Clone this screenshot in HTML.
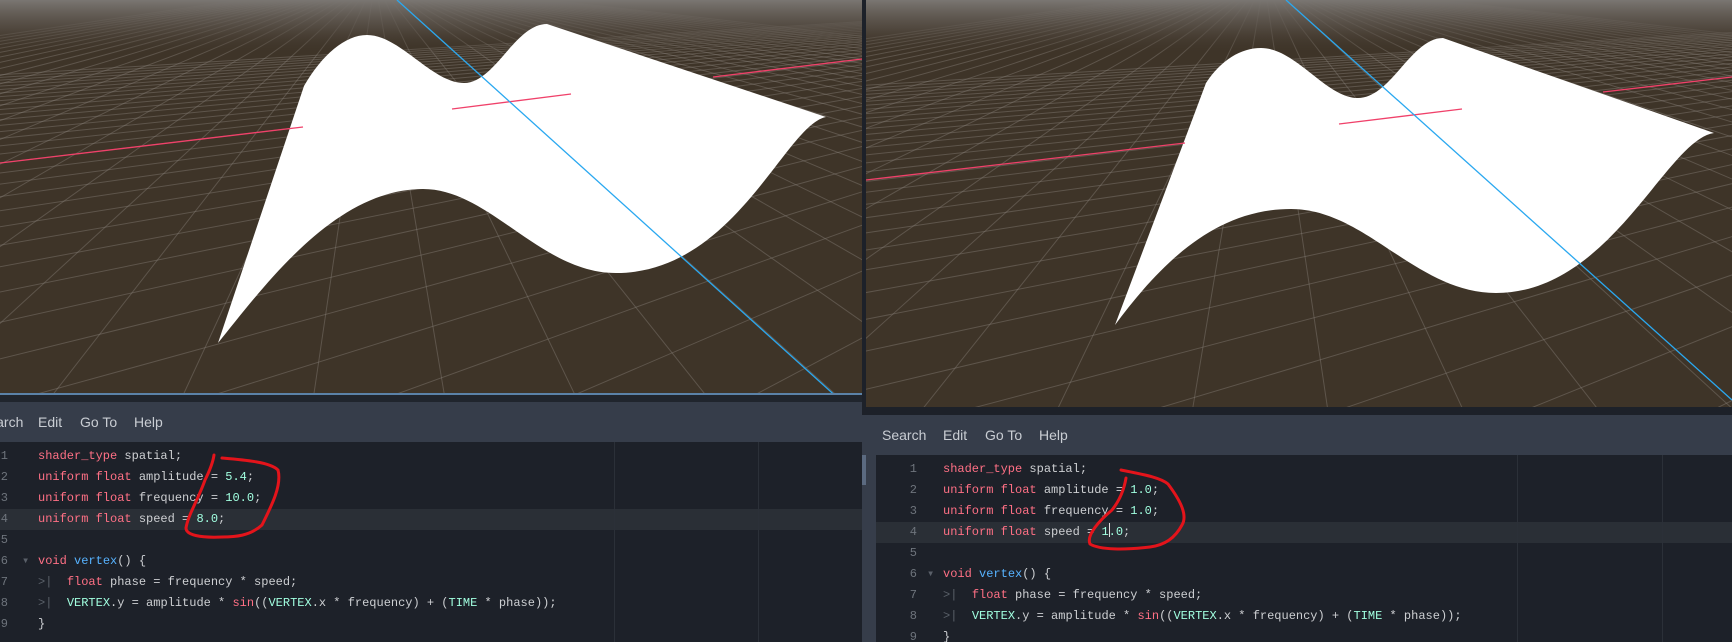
<!DOCTYPE html>
<html><head><meta charset="utf-8"><style>
*{margin:0;padding:0;box-sizing:border-box}
html,body{width:1732px;height:642px;overflow:hidden}
body{background:#1d2129;position:relative;font-family:"Liberation Sans",sans-serif}
.abs{position:absolute}
.menu{position:absolute;background:#363d4a;color:#c9cdd3;font-size:14px}
.menu span{position:absolute;top:0}
.code{position:absolute;background:#1d2129;overflow:hidden;font-family:"Liberation Mono",monospace;font-size:12px;color:#cdcfd2}
.ln{position:absolute;height:21px;line-height:21px;white-space:pre}
.n{color:#6e747c;text-align:right;width:14px}
.k{color:#ff7085}.num{color:#a1ffe0}.f{color:#57b3ff}.c{color:#a1ffe0}.t{color:#5a6069}
.hl{position:absolute;background:#2a2f36;height:21px}
.g{position:absolute;width:1px;background:#2b3038}
</style></head><body>
<svg class="abs" style="left:0;top:0" width="862" height="393" id="v1"></svg>
<div class="abs" style="left:0;top:393px;width:862px;height:2px;background:#5b82a8"></div>
<div class="abs" style="left:0;top:395px;width:862px;height:7px;background:#20252d"></div>
<div class="menu" style="left:0;top:402px;width:862px;height:40px"><span style="left:-21px;top:12px">Search</span><span style="left:38px;top:12px">Edit</span><span style="left:80px;top:12px">Go To</span><span style="left:134px;top:12px">Help</span></div>
<div class="code" style="left:0;top:442px;width:862px;height:200px">
<div class="hl" style="left:0;top:67px;width:862px"></div>
<div class="g" style="left:614px;top:0;height:200px"></div><div class="g" style="left:758px;top:0;height:200px"></div>
<div class="ln n" style="left:-6px;top:4px">1</div><div class="ln" style="left:38px;top:4px"><span class="k">shader_type</span> spatial;</div>
<div class="ln n" style="left:-6px;top:25px">2</div><div class="ln" style="left:38px;top:25px"><span class="k">uniform float</span> amplitude = <span class="num">5.4</span>;</div>
<div class="ln n" style="left:-6px;top:46px">3</div><div class="ln" style="left:38px;top:46px"><span class="k">uniform float</span> frequency = <span class="num">10.0</span>;</div>
<div class="ln n" style="left:-6px;top:67px">4</div><div class="ln" style="left:38px;top:67px"><span class="k">uniform float</span> speed = <span class="num">8.0</span>;</div>
<div class="ln n" style="left:-6px;top:88px">5</div>
<div class="ln n" style="left:-6px;top:109px">6</div><div class="ln t" style="left:22px;top:109px">▾</div><div class="ln" style="left:38px;top:109px"><span class="k">void</span> <span class="f">vertex</span>() {</div>
<div class="ln n" style="left:-6px;top:130px">7</div><div class="ln" style="left:38px;top:130px"><span class="t">&gt;|</span>  <span class="k">float</span> phase = frequency * speed;</div>
<div class="ln n" style="left:-6px;top:151px">8</div><div class="ln" style="left:38px;top:151px"><span class="t">&gt;|</span>  <span class="c">VERTEX</span>.y = amplitude * <span class="k">sin</span>((<span class="c">VERTEX</span>.x * frequency) + (<span class="c">TIME</span> * phase));</div>
<div class="ln n" style="left:-6px;top:172px">9</div><div class="ln" style="left:38px;top:172px">}</div>
</div>
<div class="abs" style="left:862px;top:442px;width:5px;height:200px;background:#2a2f37"></div>
<div class="abs" style="left:862px;top:457px;width:5px;height:28px;background:#5b6a80;border-radius:2px"></div>

<svg class="abs" style="left:866px;top:0" width="866" height="407" id="v2"></svg>
<div class="abs" style="left:866px;top:407px;width:866px;height:8px;background:#1d2129"></div>
<div class="menu" style="left:862px;top:415px;width:870px;height:227px"><span style="left:20px;top:12px">Search</span><span style="left:81px;top:12px">Edit</span><span style="left:123px;top:12px">Go To</span><span style="left:177px;top:12px">Help</span></div>
<div class="abs" style="left:862px;top:455px;width:4px;height:30px;background:#5b6a80"></div>
<div class="code" style="left:876px;top:455px;width:856px;height:187px">
<div class="hl" style="left:0;top:67px;width:856px"></div>
<div class="g" style="left:641px;top:0;height:187px"></div><div class="g" style="left:786px;top:0;height:187px"></div>
<div class="ln n" style="left:27px;top:4px">1</div><div class="ln" style="left:67px;top:4px"><span class="k">shader_type</span> spatial;</div>
<div class="ln n" style="left:27px;top:25px">2</div><div class="ln" style="left:67px;top:25px"><span class="k">uniform float</span> amplitude = <span class="num">1.0</span>;</div>
<div class="ln n" style="left:27px;top:46px">3</div><div class="ln" style="left:67px;top:46px"><span class="k">uniform float</span> frequency = <span class="num">1.0</span>;</div>
<div class="ln n" style="left:27px;top:67px">4</div><div class="ln" style="left:67px;top:67px"><span class="k">uniform float</span> speed = <span class="num">1</span><span style="display:inline-block;width:1px;height:14px;background:#e0e0e0;vertical-align:-2px;margin-right:-1px"></span><span class="num">.0</span>;</div>
<div class="ln n" style="left:27px;top:88px">5</div>
<div class="ln n" style="left:27px;top:109px">6</div><div class="ln t" style="left:51px;top:109px">▾</div><div class="ln" style="left:67px;top:109px"><span class="k">void</span> <span class="f">vertex</span>() {</div>
<div class="ln n" style="left:27px;top:130px">7</div><div class="ln" style="left:67px;top:130px"><span class="t">&gt;|</span>  <span class="k">float</span> phase = frequency * speed;</div>
<div class="ln n" style="left:27px;top:151px">8</div><div class="ln" style="left:67px;top:151px"><span class="t">&gt;|</span>  <span class="c">VERTEX</span>.y = amplitude * <span class="k">sin</span>((<span class="c">VERTEX</span>.x * frequency) + (<span class="c">TIME</span> * phase));</div>
<div class="ln n" style="left:27px;top:172px">9</div><div class="ln" style="left:67px;top:172px">}</div>
</div>
<svg class="abs" style="left:0;top:0" width="1732" height="642">
<path d="M222,458 C245,460 270,462 278,470 C282,485 272,505 262,525 C250,536 235,537 222,537 C200,538 186,535 186,528 C188,515 198,500 205,480 C210,470 213,462 214,455" fill="none" stroke="#e3141b" stroke-width="3" stroke-linecap="round"/>
<path d="M1121,470 C1140,474 1160,477 1168,484 C1180,500 1188,515 1182,525 C1175,538 1165,545 1150,547 C1125,550 1100,550 1090,544 C1086,535 1100,520 1112,510 C1120,500 1124,490 1126,478" fill="none" stroke="#e3141b" stroke-width="3" stroke-linecap="round"/>
</svg>
<script>
function grid(id,w,h,vax,vbx,ks,shape,blue,reds){
 var s='<defs><linearGradient id="sk'+id+'" x1="0" y1="0" x2="0" y2="1"><stop offset="0" stop-color="#7a7672"/><stop offset="0.5" stop-color="#5a524a" stop-opacity="0.7"/><stop offset="1" stop-color="#3e3428" stop-opacity="0"/></linearGradient></defs>';
 s+='<rect width="'+w+'" height="'+h+'" fill="#3e3428"/>';
 var vy=-20;
 for(var k=-18;k<25;k++){var X=ks[0]+k*530;s+='<line x1="'+vax+'" y1="'+vy+'" x2="'+X+'" y2="1200" stroke="#8a837c" stroke-opacity="0.42" stroke-width="1"/>';}
 for(var k=-25;k<25;k++){var X=ks[1]+k*384;s+='<line x1="'+vbx+'" y1="'+vy+'" x2="'+X+'" y2="1200" stroke="#8a837c" stroke-opacity="0.42" stroke-width="1"/>';}
 s+='<rect width="'+w+'" height="55" fill="url(#sk'+id+')"/>';
 s+='<path d="'+shape+'" fill="#fff"/>';
 reds.forEach(function(r){s+='<line x1="'+r[0]+'" y1="'+r[1]+'" x2="'+r[2]+'" y2="'+r[3]+'" stroke="#f0416a" stroke-width="1.3"/>';});
 s+='<line x1="'+blue[0]+'" y1="'+blue[1]+'" x2="'+blue[2]+'" y2="'+blue[3]+'" stroke="#2aa8f0" stroke-width="1.3"/>';
 document.getElementById(id).innerHTML=s;
}
grid('v1',862,393,1538,375,[-8715,1731],
 'M218,343 L304,86 C322,55 345,35 367,35 C400,35 432,83 464,83 C495,83 515,24 547,24 L826,117 C785,125 735,273 616,273 C540,273 490,189 423,189 C335,189 265,285 218,343 Z',
 [397,0,840,400],[[0,163,303,127],[452,109,571,94],[713,77,862,59]]);
grid('v2',866,407,1724,398,[-8715,1731],
 'M249,325 L340,83 C355,60 375,48 395,48 C430,48 460,98 492,98 C525,98 545,38 577,38 L848,133 C800,140 745,293 630,293 C550,293 500,209 425,209 C345,209 290,270 249,325 Z',
 [420,0,866,400],[[0,180,319,143],[473,124,596,109],[737,92,866,77]]);
</script>
</body></html>
